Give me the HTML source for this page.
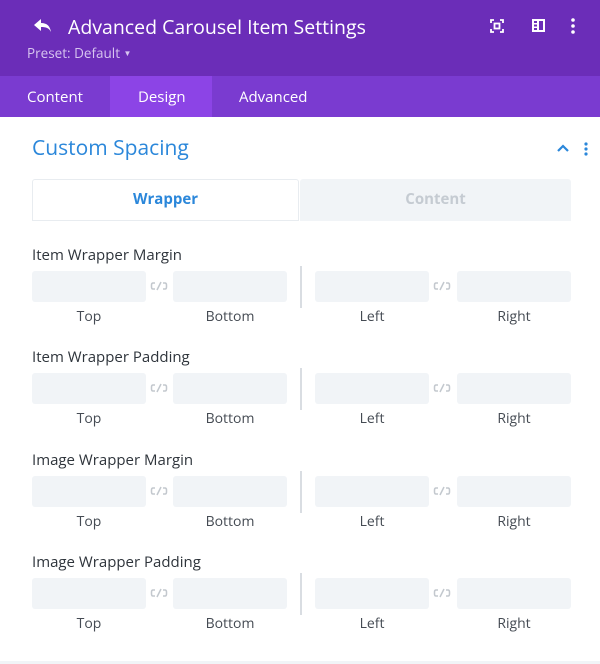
<!DOCTYPE html>
<html><head><meta charset="utf-8"><style>
*{margin:0;padding:0;box-sizing:border-box}
body{width:600px;height:664px;overflow:hidden;background:#fff;font-family:"Open Sans","Liberation Sans",sans-serif;position:relative}
.a{position:absolute}
svg{display:block}
.hdr{left:0;top:0;width:600px;height:76px;background:#6b2db8}
.tabs{left:0;top:76px;width:600px;height:41px;background:#7a3bd0}
.tab{top:76px;height:41px;line-height:42px;color:#fff;font-size:15px}
.lbl{font-size:15px;color:#2e343b;left:32px}
.in{height:31px;background:#f1f4f7;border-radius:3px;width:114px}
.cap{font-size:14px;color:#454b53;width:114px;text-align:center}
.dv{width:2px;background:#d9dde2;left:300px;height:42px}
</style></head><body>
<div class="a hdr"></div>
<svg class="a" style="left:33px;top:18px" width="20" height="16" viewBox="0 0 20 16"><path d="M8 1 L1 7 L8 13 V9 C13 9 16 10 18 14 C17 8 14 5 8 5 Z" fill="#fff"/></svg>
<div class="a" style="left:68px;top:13px;color:#fff;font-size:19.5px">Advanced Carousel Item Settings</div>
<div class="a" style="left:27px;top:44px;color:#d8c6f0;font-size:13.5px">Preset: Default <span style="font-size:8px;vertical-align:2px">▼</span></div>
<svg class="a" style="left:490px;top:19px" width="14" height="14" viewBox="0 0 14 14" fill="none" stroke="#fff" stroke-width="1.8"><path d="M1 4V1h3M10 1h3v3M13 10v3h-3M4 13H1v-3"/><rect x="4.5" y="4.5" width="5" height="5"/></svg>
<svg class="a" style="left:532px;top:19px" width="13" height="13" viewBox="0 0 13 13"><rect x="1" y="1" width="11" height="11" fill="none" stroke="#fff" stroke-width="2"/><rect x="5" y="1" width="2" height="11" fill="#fff"/><rect x="2" y="4" width="3" height="1.5" fill="#fff"/><rect x="2" y="7.5" width="3" height="1.5" fill="#fff"/></svg>
<svg class="a" style="left:571px;top:18px" width="4" height="16"><circle cx="2" cy="2" r="1.8" fill="#fff"/><circle cx="2" cy="8" r="1.8" fill="#fff"/><circle cx="2" cy="14" r="1.8" fill="#fff"/></svg>
<div class="a tabs"></div>
<div class="a" style="left:110px;top:76px;width:102px;height:41px;background:#8c44e6"></div>
<div class="a tab" style="left:27px">Content</div>
<div class="a tab" style="left:138px">Design</div>
<div class="a tab" style="left:239px">Advanced</div>
<div class="a" style="left:32px;top:134px;color:#2b87da;font-size:21px">Custom Spacing</div>
<svg class="a" style="left:557px;top:144px" width="12" height="8"><path d="M1 7L6 2L11 7" fill="none" stroke="#2b87da" stroke-width="2.2"/></svg>
<svg class="a" style="left:584px;top:142px" width="4" height="14"><circle cx="2" cy="2" r="1.6" fill="#2b87da"/><circle cx="2" cy="7" r="1.6" fill="#2b87da"/><circle cx="2" cy="12" r="1.6" fill="#2b87da"/></svg>
<div class="a" style="left:300px;top:179px;width:271px;height:42px;background:#f1f4f7;border-radius:3px 3px 0 0"></div>
<div class="a" style="left:32px;top:179px;width:267px;height:42px;background:#fff;border:1px solid #e8ecf0;border-radius:3px 3px 0 0"></div>
<div class="a" style="left:32px;top:189px;width:267px;text-align:center;color:#2b87da;font-weight:bold;font-size:15px">Wrapper</div>
<div class="a" style="left:300px;top:189px;width:271px;text-align:center;color:#c5cbd2;font-weight:bold;font-size:15px">Content</div>

<div class="a lbl" style="top:245px">Item Wrapper Margin</div>
<div class="a lbl" style="top:347px">Item Wrapper Padding</div>
<div class="a lbl" style="top:450px">Image Wrapper Margin</div>
<div class="a lbl" style="top:552px">Image Wrapper Padding</div>

<div id="g"></div>
<script>
var ys=[271,373,476,578],h='';
var lk='<svg width="18" height="10" viewBox="0 0 18 10" fill="none" stroke="#c3c8ce" stroke-width="1.5"><path d="M5 2H3Q1.5 2 1.5 4V6Q1.5 8 3 8H5M7 9L11 1M13 2H15Q16.5 2 16.5 4V6Q16.5 8 15 8H13"/></svg>';
ys.forEach(function(y){
[32,173,315,457].forEach(function(x,i){
h+='<div class="a in" style="left:'+x+'px;top:'+y+'px"></div>';
h+='<div class="a cap" style="left:'+x+'px;top:'+(y+36)+'px">'+['Top','Bottom','Left','Right'][i]+'</div>';});
h+='<div class="a" style="left:150px;top:'+(y+10)+'px">'+lk+'</div><div class="a" style="left:433px;top:'+(y+10)+'px">'+lk+'</div>';
h+='<div class="a dv" style="top:'+(y-5)+'px"></div>';
});
document.getElementById('g').innerHTML=h;
</script>
<div class="a" style="left:0;top:661px;width:600px;height:3px;background:#f1f4f7"></div>
</body></html>
